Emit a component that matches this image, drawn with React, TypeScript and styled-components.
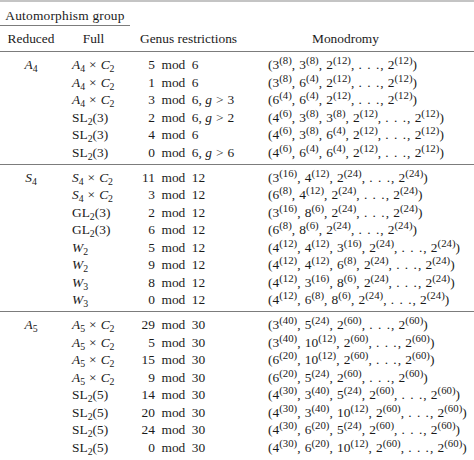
import React from "react";
import styled, { createGlobalStyle } from "styled-components";

const Global = createGlobalStyle`
  html, body { margin: 0; padding: 0; background: #ffffff; }
  body {
    font-family: "Liberation Serif", "Times New Roman", serif;
    font-size: 13.4px;
    color: #1a1a1a;
  }
`;

const Table = styled.div`
  width: 474px;
  display: flex;
  flex-direction: column;
`;

const TopRule = styled.div`
  height: 2px;
  background: #c4c4c4;
`;

const Rule = styled.div`
  height: 1px;
  background: #7c7c7c;
`;

const Row = styled.div`
  display: grid;
  grid-template-columns: 62px 68px 138px 1fr;
  height: 17.5px;
  line-height: 17.5px;
  white-space: nowrap;
`;

const HeadRow = styled(Row)<{ $pt: number; $pb: number }>`
  height: auto;
  padding-top: ${(p) => p.$pt}px;
  padding-bottom: ${(p) => p.$pb}px;
`;

const SpanHead = styled.div`
  grid-column: 1 / 3;
  text-align: center;
  padding-top: 5px;
  padding-bottom: 0.5px;
  border-bottom: 1px solid #7c7c7c;
  line-height: 17.5px;
  letter-spacing: 0.2px;
`;

const HeadCell = styled.div<{ $align?: string; $pl?: number; $pr?: number }>`
  text-align: ${(p) => p.$align || "left"};
  padding-left: ${(p) => p.$pl || 0}px;
  padding-right: ${(p) => p.$pr || 0}px;
`;

const Group = styled.div`
  padding: 4px 0 2.5px;
  display: flex;
  flex-direction: column;
`;

const ReducedCell = styled.div`
  text-align: center;
`;

const FullCell = styled.div`
  padding-left: 10px;
`;

const GenusCell = styled.div`
  display: flex;
`;

const Num = styled.span`
  width: 25px;
  text-align: right;
`;

const Mod = styled.span`
  margin: 0 6.5px;
`;

const Rel = styled.span`
  margin: 0 4px;
`;

const MonoCell = styled.div``;

const It = styled.i`
  font-style: italic;
`;

const Sub = styled.span`
  font-size: 9.8px;
  position: relative;
  top: 3px;
  line-height: 0;
`;

const Sup = styled.span`
  font-size: 10.8px;
  position: relative;
  top: -5px;
  line-height: 0;
`;

const Comma = styled.span`
  margin-right: 4.2px;
`;

const Dots = styled.span`
  letter-spacing: 1px;
`;

const Times = styled.span`
  margin: 0 4px;
`;

function Full({ v }: { v: string }) {
  if (v.includes("x")) {
    const [l, r] = v.split("x");
    return (
      <>
        <It>{l[0]}</It>
        <Sub>{l.slice(1)}</Sub>
        <Times>×</Times>
        <It>{r[0]}</It>
        <Sub>{r.slice(1)}</Sub>
      </>
    );
  }
  if (v.startsWith("SL") || v.startsWith("GL")) {
    return (
      <>
        {v.slice(0, 2)}
        <Sub>{v[2]}</Sub>
        {v.slice(3)}
      </>
    );
  }
  return (
    <>
      <It>{v[0]}</It>
      <Sub>{v.slice(1)}</Sub>
    </>
  );
}

function Reduced({ v }: { v: string }) {
  if (!v) return null;
  return (
    <>
      <It>{v[0]}</It>
      <Sub>{v.slice(1)}</Sub>
    </>
  );
}

function Mono({ v }: { v: string }) {
  const terms = v.split(",");
  return (
    <>
      (
      {terms.map((t, i) => (
        <React.Fragment key={i}>
          {i > 0 ? <Comma>,</Comma> : null}
          {t === "..." ? (
            <Dots>. . .</Dots>
          ) : (
            <>
              {t.split(":")[0]}
              <Sup>({t.split(":")[1]})</Sup>
            </>
          )}
        </React.Fragment>
      ))}
      )
    </>
  );
}

const groups: { red: string; rows: [string, string, string, string, string][] }[] = [
  {
    red: "A4",
    rows: [
      ["A4xC2", "5", "6", "", "3:8,3:8,2:12,...,2:12"],
      ["A4xC2", "1", "6", "", "3:8,6:4,2:12,...,2:12"],
      ["A4xC2", "3", "6", "3", "6:4,6:4,2:12,...,2:12"],
      ["SL2(3)", "2", "6", "2", "4:6,3:8,3:8,2:12,...,2:12"],
      ["SL2(3)", "4", "6", "", "4:6,3:8,6:4,2:12,...,2:12"],
      ["SL2(3)", "0", "6", "6", "4:6,6:4,6:4,2:12,...,2:12"],
    ],
  },
  {
    red: "S4",
    rows: [
      ["S4xC2", "11", "12", "", "3:16,4:12,2:24,...,2:24"],
      ["S4xC2", "3", "12", "", "6:8,4:12,2:24,...,2:24"],
      ["GL2(3)", "2", "12", "", "3:16,8:6,2:24,...,2:24"],
      ["GL2(3)", "6", "12", "", "6:8,8:6,2:24,...,2:24"],
      ["W2", "5", "12", "", "4:12,4:12,3:16,2:24,...,2:24"],
      ["W2", "9", "12", "", "4:12,4:12,6:8,2:24,...,2:24"],
      ["W3", "8", "12", "", "4:12,3:16,8:6,2:24,...,2:24"],
      ["W3", "0", "12", "", "4:12,6:8,8:6,2:24,...,2:24"],
    ],
  },
  {
    red: "A5",
    rows: [
      ["A5xC2", "29", "30", "", "3:40,5:24,2:60,...,2:60"],
      ["A5xC2", "5", "30", "", "3:40,10:12,2:60,...,2:60"],
      ["A5xC2", "15", "30", "", "6:20,10:12,2:60,...,2:60"],
      ["A5xC2", "9", "30", "", "6:20,5:24,2:60,...,2:60"],
      ["SL2(5)", "14", "30", "", "4:30,3:40,5:24,2:60,...,2:60"],
      ["SL2(5)", "20", "30", "", "4:30,3:40,10:12,2:60,...,2:60"],
      ["SL2(5)", "24", "30", "", "4:30,6:20,5:24,2:60,...,2:60"],
      ["SL2(5)", "0", "30", "", "4:30,6:20,10:12,2:60,...,2:60"],
    ],
  },
];

export default function App() {
  return (
    <>
      <Global />
      <Table>
        <TopRule />
        <HeadRow $pt={0} $pb={0}>
          <SpanHead>Automorphism group</SpanHead>
        </HeadRow>
        <HeadRow $pt={4.25} $pb={3.25}>
          <HeadCell $align="center">Reduced</HeadCell>
          <HeadCell $align="center" $pr={5}>
            Full
          </HeadCell>
          <HeadCell $pl={10}>Genus restrictions</HeadCell>
          <HeadCell $pl={44}>Monodromy</HeadCell>
        </HeadRow>
        {groups.map((g, gi) => (
          <React.Fragment key={gi}>
            <Rule />
            <Group>
              {g.rows.map((r, ri) => (
                <Row key={ri}>
                  <ReducedCell>{ri === 0 ? <Reduced v={g.red} /> : null}</ReducedCell>
                  <FullCell>
                    <Full v={r[0]} />
                  </FullCell>
                  <GenusCell>
                    <Num>{r[1]}</Num>
                    <Mod>mod</Mod>
                    <span>
                      {r[2]}
                      {r[3] ? (
                        <>
                          ,&nbsp;<It>g</It>
                          <Rel>&gt;</Rel>
                          {r[3]}
                        </>
                      ) : null}
                    </span>
                  </GenusCell>
                  <MonoCell>
                    <Mono v={r[4]} />
                  </MonoCell>
                </Row>
              ))}
            </Group>
          </React.Fragment>
        ))}
      </Table>
    </>
  );
}
